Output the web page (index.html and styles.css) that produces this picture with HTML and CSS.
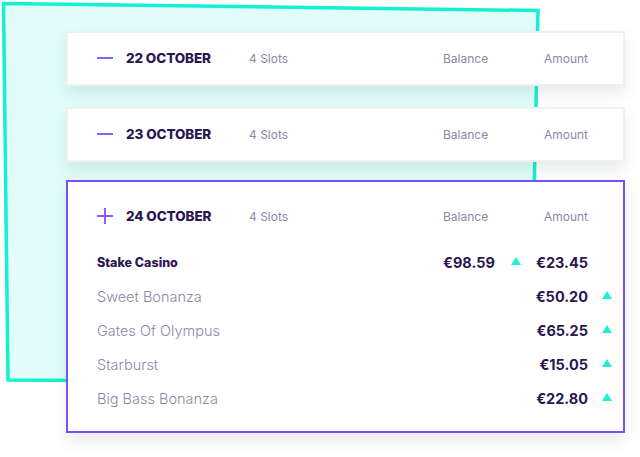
FILE: index.html
```html
<!DOCTYPE html>
<html>
<head>
<meta charset="utf-8" />
<title>Slots</title>
<link rel="stylesheet" href="styles.css">
</head>
<body>
<div class="stage">
  <svg class="backdrop" width="640" height="457" viewBox="0 0 640 457">
    <polygon points="3.5,3.5 538,10.5 530,383 8,380" fill="#e2fdf9" stroke="#14f1d2" stroke-width="3.5" stroke-linejoin="miter" />
  </svg>

  <div class="list">
    <div class="day">
      <div class="row head">
        <span class="toggle"><i class="bar"></i></span>
        <strong class="date">22 OCTOBER</strong>
        <span class="muted">4 Slots</span>
        <span class="muted">Balance</span>
        <span></span>
        <span class="muted right">Amount</span>
        <span></span>
      </div>
    </div>

    <div class="day">
      <div class="row head">
        <span class="toggle"><i class="bar"></i></span>
        <strong class="date">23 OCTOBER</strong>
        <span class="muted">4 Slots</span>
        <span class="muted">Balance</span>
        <span></span>
        <span class="muted right">Amount</span>
        <span></span>
      </div>
    </div>

    <div class="day open">
      <div class="row head">
        <span class="toggle"><i class="bar"></i><i class="bar up"></i></span>
        <strong class="date">24 OCTOBER</strong>
        <span class="muted">4 Slots</span>
        <span class="muted">Balance</span>
        <span></span>
        <span class="muted right">Amount</span>
        <span></span>
      </div>
      <div class="rows">
        <div class="row item">
          <span class="name main">Stake Casino</span>
          <span class="val">€98.59</span>
          <span class="arrow"></span>
          <span class="val right">€23.45</span>
          <span></span>
        </div>
        <div class="row item">
          <span class="name">Sweet Bonanza</span>
          <span></span>
          <span></span>
          <span class="val right">€50.20</span>
          <span class="arrow"></span>
        </div>
        <div class="row item">
          <span class="name">Gates Of Olympus</span>
          <span></span>
          <span></span>
          <span class="val right">€65.25</span>
          <span class="arrow"></span>
        </div>
        <div class="row item">
          <span class="name">Starburst</span>
          <span></span>
          <span></span>
          <span class="val right">€15.05</span>
          <span class="arrow"></span>
        </div>
        <div class="row item">
          <span class="name">Big Bass Bonanza</span>
          <span></span>
          <span></span>
          <span class="val right">€22.80</span>
          <span class="arrow"></span>
        </div>
      </div>
    </div>
  </div>
</div>
</body>
</html>
```

FILE: styles.css
```css
*{margin:0;padding:0;box-sizing:border-box;}
body{background:#fff;font-family:"Inter","Noto Sans",sans-serif;color:#2b1652;overflow:hidden;}
.stage{position:relative;width:640px;height:457px;}
.backdrop{position:absolute;left:0;top:0;}
.list{position:relative;padding:31px 0 0 66px;width:625px;display:flex;flex-direction:column;}
.day{background:#fff;border:2px solid #f0f0f2;box-shadow:0 8px 14px rgba(40,70,70,0.10);padding:8px 0 9px 29px;}
.day + .day{margin-top:21px;}
.day.open{margin-top:18px;border-color:#7b4dff;padding:17px 0 16px 29px;}
.row{display:grid;align-items:center;height:34px;}
.row.head{grid-template-columns:29px 123px 194px 63px 20px 62px 35px;}
.row.item{grid-template-columns:346px 63px 20px 62px 35px;}
.rows{margin-top:12px;}
.toggle{position:relative;width:16px;height:16px;display:block;}
.bar{position:absolute;left:0;top:7px;width:16px;height:1.5px;background:#8b5cff;}
.bar.up{left:7.25px;top:0;width:1.5px;height:16px;}
.date{font-size:13.5px;font-weight:800;letter-spacing:-0.1px;}
.muted{font-size:12px;color:#8e88a8;font-weight:400;}
.right{text-align:right;}
.name{font-size:14.5px;font-weight:300;color:#8e88a8;}
.name.main{font-size:12.5px;font-weight:800;color:#2b1652;}
.val{font-size:14.5px;font-weight:700;color:#2b1652;}
.arrow{display:flex;justify-content:center;}
.item .arrow::before{content:"";border-left:5px solid transparent;border-right:5px solid transparent;border-bottom:8px solid #1ff0d0;margin-top:-2px;}
.item .arrow:nth-child(5)::before{margin-left:2px;}
```
